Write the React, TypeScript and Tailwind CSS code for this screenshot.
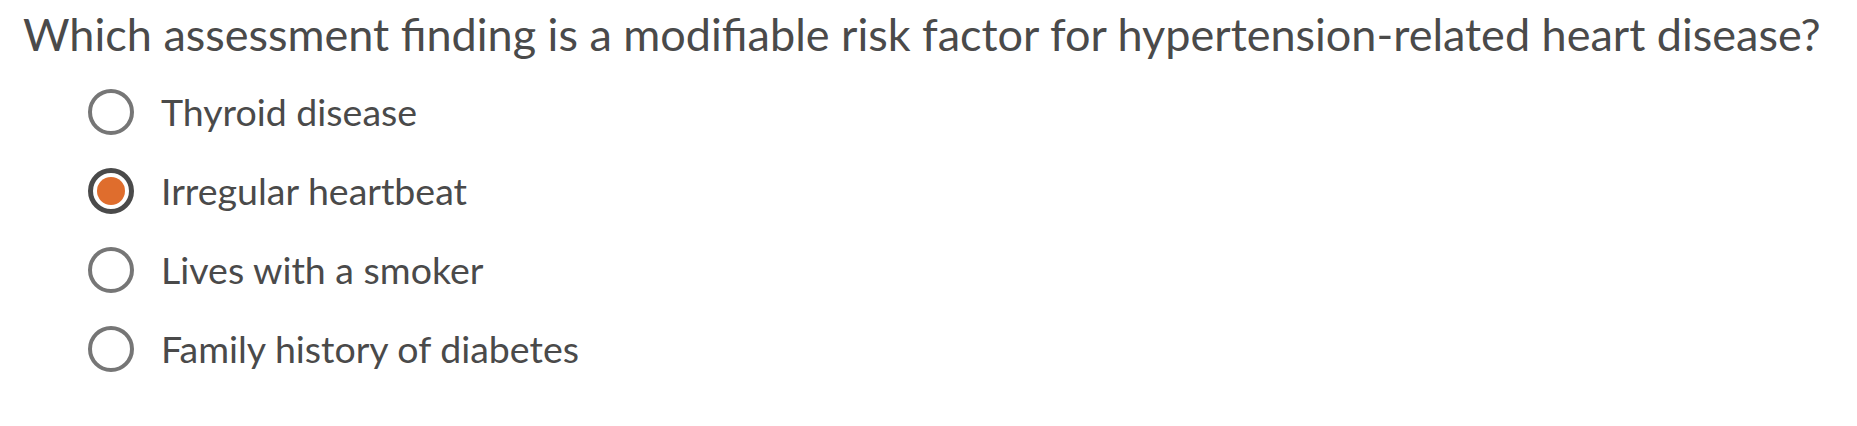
const options = [
  { id: "a", label: "Thyroid disease" },
  { id: "b", label: "Irregular heartbeat" },
  { id: "c", label: "Lives with a smoker" },
  { id: "d", label: "Family history of diabetes" },
];

function Radio({ checked }: { checked: boolean }) {
  if (checked) {
    return (
      <span className="flex h-[46px] w-[46px] shrink-0 items-center justify-center rounded-full border-[5px] border-[#4a4a4a] bg-white">
        <span className="h-[28px] w-[28px] rounded-full bg-[#df6d2d]" />
      </span>
    );
  }
  return <span className="h-[46px] w-[46px] shrink-0 rounded-full border-4 border-[#767676] bg-white" />;
}

export default function App() {
  const selected = "b";
  return (
    <div className="h-[426px] w-full bg-white pl-[23px] pt-[6px] font-['Lato',sans-serif] text-[#4a4a4a]">
      <h1 className="text-[45px] font-normal leading-[56px]">
        Which assessment finding is a modifiable risk factor for hypertension-related heart disease?
      </h1>
      <ul className="mt-[27px] flex flex-col gap-[33px] pl-[65px]">
        {options.map((o) => (
          <li key={o.id} className="flex items-center gap-[27px]">
            <Radio checked={o.id === selected} />
            <span className="text-[37.5px] leading-[46px]">{o.label}</span>
          </li>
        ))}
      </ul>
    </div>
  );
}
